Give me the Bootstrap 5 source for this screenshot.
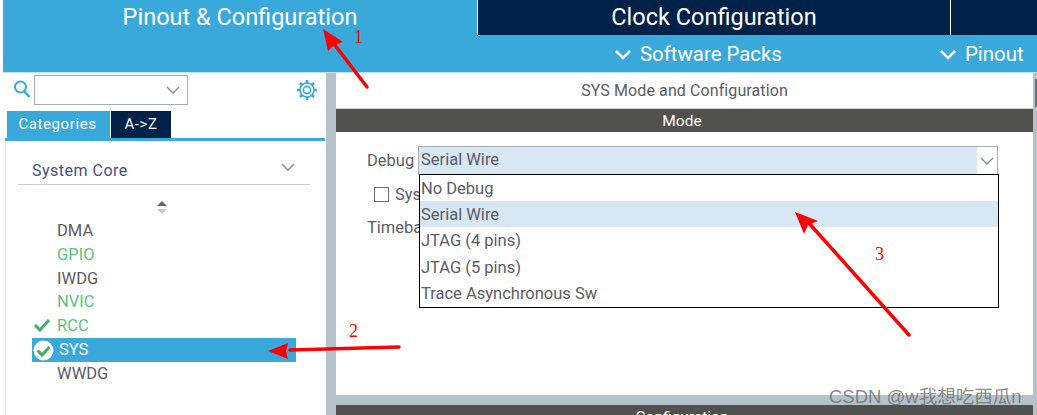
<!DOCTYPE html>
<html lang="en">

<head>
	<meta charset="UTF-8" />
	<meta name="viewport" content="width=device-width, initial-scale=1" />
	<title>SYS Mode and Configuration</title>
	<link href="https://cdn.jsdelivr.net/npm/bootstrap@5.3.0/dist/css/bootstrap.min.css" rel="stylesheet" />
	<style>
		:root {
		  --cube-blue: #39a9dc;
		  --cube-navy: #002249;
		  --cube-grey: #b5c2c9;
		  --cube-dark: #515250;
		  --cube-text: #5c5c66;
		  --cube-green: #5fbf80;
		  --cube-pick: #d8e7f4;
		}

		html, body {
		  height: 415px;
		  overflow: hidden;
		}

		body {
		  font-family: Roboto, "Liberation Sans", sans-serif;
		  background: #fff;
		  color: var(--cube-text);
		  position: relative;
		  width: 1037px;
		}

		.top-tabs { height: 35px; padding-left: 3px; }
		.top-tab {
		  color: #fff;
		  font-size: 23.5px;
		  line-height: 35px;
		  text-align: center;
		  height: 35px;
		}
		.tab-pinout { width: 474px; background: var(--cube-blue); }
		.tab-clock { width: 474px; background: var(--cube-navy); border-left: 1px solid #fff; border-right: 1px solid #fff; }
		.tab-rest { flex: 1; background: var(--cube-navy); }

		.sub-bar {
		  height: 38px;
		  margin-left: 3px;
		  background: var(--cube-blue);
		  border-bottom: 1px solid #bfe3f3;
		  position: relative;
		}
		.sub-item { display: flex; align-items: center; gap: 8px; position: absolute; top: 1px; height: 37px; color: #fff; font-size: 20.4px; }
		.sub-packs { left: 611px; }
		.sub-pin { left: 936px; }

		.work-area { height: 342px; }
		.left-pane { width: 326px; padding-left: 5px; }
		.splitter { width: 10px; background: var(--cube-grey); }
		.right-pane { width: 697px; }
		.right-edge { flex: 1; background: var(--cube-grey); padding-top: 6px; }
		.edge-thumb { height: 28px; width: 2px; margin-left: 2px; background: #6f7375; }

		.search-row { height: 38px; padding-top: 2px; }
		.search-icon { margin: 4px 0 0 8px; }
		.search-combo {
		  width: 154px;
		  height: 30px;
		  border: 1px solid #a7acaf;
		  margin-left: 3px;
		  padding-right: 7px;
		}
		.gear-icon { margin: 4px 8px 0 auto; }

		.side-tabs { height: 27px; padding-left: 2px; }
		.side-tab { color: #fff; font-size: 15px; letter-spacing: .6px; line-height: 26px; text-align: center; height: 27px; }
		.side-cat { width: 103px; background: var(--cube-blue); padding-right: 2px; }
		.side-az { width: 60px; background: var(--cube-navy); margin-left: 1px; }
		.side-rule { height: 3px; background: var(--cube-blue); margin-right: 1px; }

		.cat-box { border-left: 1px solid #e8ecee; height: 274px; padding-left: 12px; }
		.cat-head {
		  width: 292px;
		  height: 44px;
		  padding: 18px 15px 0 14px;
		  font-size: 16px;
		  color: #4b4f78;
		  border-bottom: 1px solid #c9cdd0;
		  letter-spacing: .5px;
		}
		.updown { margin: 15px 0 0 138px; display: block; }
		.item-list { margin: 4px 0 0 14px; }
		.item-row {
		  width: 264px;
		  height: 23.8px;
		  line-height: 24px;
		  font-size: 16.5px;
		  padding-left: 25px;
		  position: relative;
		}
		.item-on { color: var(--cube-green); }
		.item-sel { background: var(--cube-blue); color: #fff; padding-left: 27px; }
		.item-icon { position: absolute; left: 1px; top: 2px; }

		.pane-title { height: 35px; line-height: 36px; text-align: center; font-size: 16px; letter-spacing: .1px; }
		.dark-bar {
		  background: var(--cube-dark);
		  color: #fff;
		  height: 24px;
		  line-height: 24px;
		  text-align: center;
		  font-size: 15.5px;
		  border-top: 1px solid #d0d3d4;
		  padding-right: 5px;
		}
		.mode-body { height: 263px; position: relative; font-size: 16.5px; }
		.debug-row { padding: 14px 0 0 31px; height: 45px; }
		.debug-label { line-height: 30px; width: 51px; }
		.debug-combo {
		  width: 580px;
		  height: 29px;
		  border: 1px solid #a7acaf;
		  background: var(--cube-pick);
		  line-height: 26px;
		  padding-left: 2px;
		}
		.combo-btn { width: 20px; background: #fff; }
		.sys-row { padding: 6px 0 0 38px; height: 39px; }
		.sys-check { width: 15px; height: 15px; border: 1px solid #6d6d6d; margin: 4px 6px 0 0; }
		.time-row { padding: 0 0 0 31px; line-height: 24px; }

		.debug-menu {
		  position: absolute;
		  left: 83px;
		  top: 42px;
		  width: 580px;
		  height: 134px;
		  background: #fff;
		  border: 1px solid #000;
		}
		.menu-row { height: 26.2px; line-height: 28px; padding-left: 1px; }
		.menu-row.picked { background: var(--cube-pick); }

		.gap-strip { height: 10px; background: var(--cube-grey); }
		.config-bar { border-top: 0; }

		.annot-layer { position: absolute; left: 0; top: 0; pointer-events: none; }
		.annot-num { position: absolute; color: #f00; font-family: "Liberation Serif", serif; font-size: 18px; line-height: 20px; }
		.num-one { left: 354px; top: 27px; }
		.num-two { left: 349px; top: 321px; }
		.num-three { left: 875px; top: 244px; }
		.watermark {
		  position: absolute;
		  left: 829px;
		  top: 385px;
		  font-size: 18.5px;
		  line-height: 24px;
		  color: rgba(110, 110, 110, .8);
		  font-family: "Liberation Sans", "Noto Sans CJK SC", sans-serif;
		  white-space: nowrap;
		}
	</style>
</head>

<body>
	<div class="top-tabs d-flex">
		<div class="top-tab tab-pinout">Pinout &amp; Configuration</div>
		<div class="top-tab tab-clock">Clock Configuration</div>
		<div class="top-tab tab-rest"></div>
	</div>
	<div class="sub-bar">
		<div class="sub-item sub-packs">
			<svg width="18" height="11" viewBox="0 0 18 11"><path d="M2 2l7 7 7-7" fill="none" stroke="#fff" stroke-width="2.5" /></svg>
			<span>Software Packs</span>
		</div>
		<div class="sub-item sub-pin">
			<svg width="18" height="11" viewBox="0 0 18 11"><path d="M2 2l7 7 7-7" fill="none" stroke="#fff" stroke-width="2.5" /></svg>
			<span>Pinout</span>
		</div>
	</div>

	<div class="work-area d-flex overflow-hidden">
		<div class="left-pane">
			<div class="search-row d-flex">
				<svg class="search-icon" width="18" height="20" viewBox="0 0 18 20"><circle cx="7.5" cy="8" r="5.5" fill="none" stroke="#39a9dc" stroke-width="2" /><path d="M11.5 12.500l5 5.500" stroke="#39a9dc" stroke-width="2.6" /></svg>
				<div class="search-combo d-flex align-items-center justify-content-end">
					<svg width="14" height="8" viewBox="0 0 14 8"><path d="M1 1l6 6 6-6" fill="none" stroke="#85898c" stroke-width="1.4" /></svg>
				</div>
				<svg class="gear-icon" width="22" height="22" viewBox="0 0 22 22"><circle cx="11" cy="11" r="3.6" fill="none" stroke="#39a9dc" stroke-width="1.6" /><circle cx="11" cy="11" r="7" fill="none" stroke="#39a9dc" stroke-width="1.6" /><path d="M11 1v3M11 18v3M1 11h3M18 11h3M4 4l2 2M16 16l2 2M18 4l-2 2M6 16l-2 2" stroke="#39a9dc" stroke-width="2.6" /></svg>
			</div>
			<div class="side-tabs d-flex">
				<div class="side-tab side-cat">Categories</div>
				<div class="side-tab side-az">A-&gt;Z</div>
			</div>
			<div class="side-rule"></div>
			<div class="cat-box">
				<div class="cat-head d-flex justify-content-between">
					<span>System Core</span>
					<svg class="mt-1" width="14" height="8" viewBox="0 0 14 8"><path d="M1 1l6 6 6-6" fill="none" stroke="#85898c" stroke-width="1.4" /></svg>
				</div>
				<svg class="updown" width="12" height="15" viewBox="0 0 12 15"><path d="M6 1l5 5H1z" fill="#666" /><path d="M6 14l5-5H1z" fill="#c4c8ca" /></svg>
				<div class="item-list">
					<div class="item-row">DMA</div>
					<div class="item-row item-on">GPIO</div>
					<div class="item-row">IWDG</div>
					<div class="item-row item-on">NVIC</div>
					<div class="item-row item-on">RCC
						<svg class="item-icon" width="18" height="18" viewBox="0 0 18 18"><path d="M2 9l5 5 9-10" fill="none" stroke="#43ad6e" stroke-width="3" /></svg>
					</div>
					<div class="item-row item-sel">SYS
						<svg class="item-icon" width="21" height="21" viewBox="0 0 21 21"><circle cx="10.5" cy="10.5" r="10" fill="#fff" /><path d="M4.5 10.5l4.5 4.5 7.500-8" fill="none" stroke="#43ad6e" stroke-width="3" /></svg>
					</div>
					<div class="item-row">WWDG</div>
				</div>
			</div>
		</div>
		<div class="splitter"></div>
		<div class="right-pane">
			<div class="pane-title">SYS Mode and Configuration</div>
			<div class="dark-bar">Mode</div>
			<div class="mode-body">
				<div class="debug-row d-flex">
					<div class="debug-label">Debug</div>
					<div class="debug-combo d-flex justify-content-between">
						<span>Serial Wire</span>
						<div class="combo-btn d-flex align-items-center justify-content-center">
							<svg width="14" height="8" viewBox="0 0 14 8"><path d="M1 1l6 6 6-6" fill="none" stroke="#85898c" stroke-width="1.4" /></svg>
						</div>
					</div>
				</div>
				<div class="sys-row d-flex">
					<div class="sys-check"></div>
					<div>Sys</div>
				</div>
				<div class="time-row">Timebase</div>
				<div class="debug-menu">
					<div class="menu-row">No Debug</div>
					<div class="menu-row picked">Serial Wire</div>
					<div class="menu-row">JTAG (4 pins)</div>
					<div class="menu-row">JTAG (5 pins)</div>
					<div class="menu-row">Trace Asynchronous Sw</div>
				</div>
			</div>
			<div class="gap-strip"></div>
			<div class="dark-bar config-bar">Configuration</div>
		</div>
		<div class="right-edge"><div class="edge-thumb"></div></div>
	</div>

	<svg class="annot-layer" width="1037" height="415" viewBox="0 0 1037 415">
		<path d="M367 87L331 40" stroke="#f00" stroke-width="3.500" stroke-linecap="round" />
		<path d="M323 29l5 22 6-6 9-3z" fill="#f00" />
		<path d="M399 347L290 350" stroke="#f00" stroke-width="3.500" stroke-linecap="round" />
		<path d="M268 351l20-8 -2 8 2 8z" fill="#f00" />
		<path d="M909 335L808 222" stroke="#f00" stroke-width="3.500" stroke-linecap="round" />
		<path d="M795 212l9 22 4-9 10-4z" fill="#f00" />
	</svg>
	<div class="annot-num num-one">1</div>
	<div class="annot-num num-two">2</div>
	<div class="annot-num num-three">3</div>
	<div class="watermark">CSDN @w我想吃西瓜n</div>

	<script src="https://cdn.jsdelivr.net/npm/bootstrap@5.3.0/dist/js/bootstrap.bundle.min.js"></script>
</body>

</html>
